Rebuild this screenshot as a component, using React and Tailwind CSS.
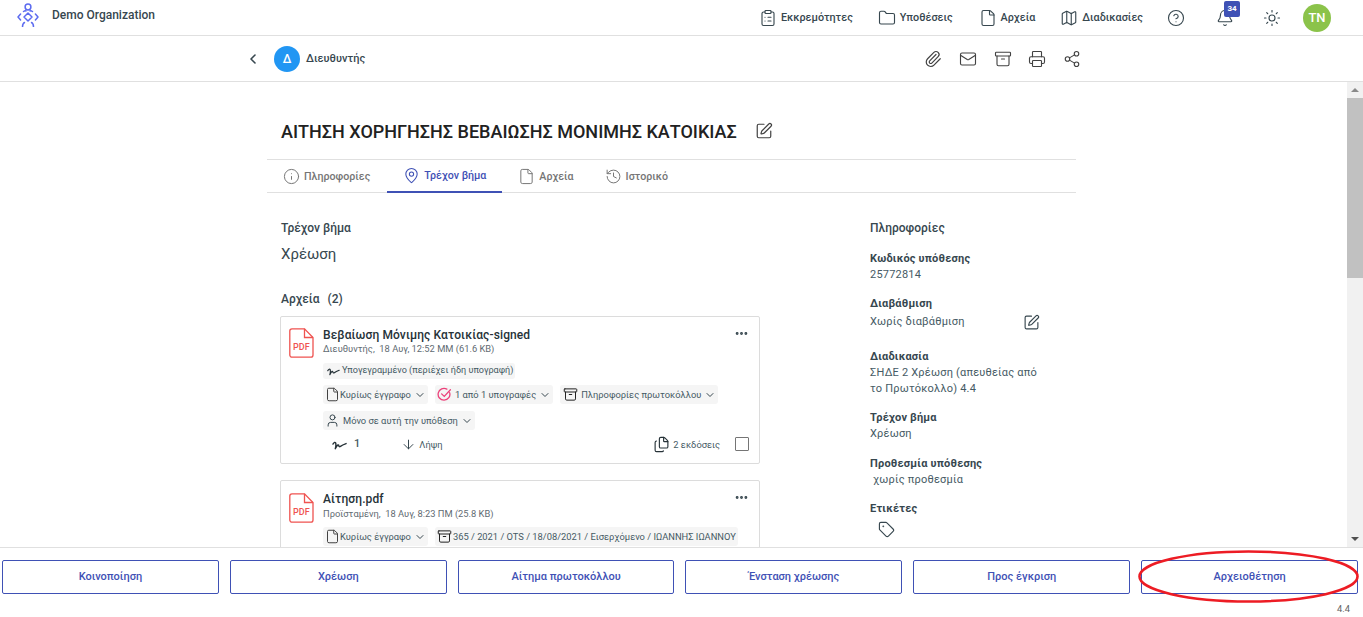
import React from 'react';
import {
  Archive, ArrowDown, Bell, ChevronDown, ChevronLeft, CircleHelp, ClipboardList, Files, File, Folder, History,
  Info, Mail, Map, MapPin, MoreHorizontal, Paperclip, Printer, Share2, SquarePen, Sun, Tag, User,
} from 'lucide-react';

function Logo() {
  return (
    <svg width="22" height="24" viewBox="0 0 22 24" fill="none" stroke="#5c6bf0" strokeWidth="1.5" strokeLinecap="round" strokeLinejoin="round">
      <circle cx="11" cy="4" r="2.9" />
      <path d="M11 10 L15 14 L11 18 L7 14 Z" />
      <path d="M3.6 11 L1 14 L3.6 17" />
      <path d="M18.4 11 L21 14 L18.4 17" />
      <path d="M6.5 8.5 Q8 7.5 9 8" />
      <path d="M15.5 8.5 Q14 7.5 13 8" />
      <path d="M5.5 24 Q5.5 20.5 7.5 19.5" />
      <path d="M16.5 24 Q16.5 20.5 14.5 19.5" />
    </svg>
  );
}

function Squiggle({ className }) {
  return (
    <svg className={className} viewBox="0 0 16 10" fill="none" stroke="#263238" strokeWidth="1.5" strokeLinecap="round" strokeLinejoin="round">
      <path d="M1 4 Q3 1 4 3 Q4.5 6 3.5 9 Q6 4 7 5 Q7.5 7.5 9 6.5 Q11 5 15 3.5" />
    </svg>
  );
}

function PdfIcon() {
  return (
    <svg width="25" height="30" viewBox="0 0 25 30" fill="none" className="shrink-0">
      <path d="M3 .8 H15.5 L24 9.5 V27 a2.2 2.2 0 0 1 -2.2 2.2 H3 A2.2 2.2 0 0 1 .8 27 V3 A2.2 2.2 0 0 1 3 .8 Z" stroke="#ef5350" strokeWidth="1.3" />
      <path d="M15.5 .8 V9.5 H24" stroke="#ef5350" strokeWidth="1.3" />
      <text x="12.4" y="22" textAnchor="middle" fontSize="9" fontWeight="500" fill="#ef5350" fontFamily="Roboto, sans-serif">PDF</text>
    </svg>
  );
}

function Chip({ icon, children, arrow, className = '' }) {
  return (
    <div className={`h-[19px] flex items-center rounded-[3px] bg-[#f5f5f5] pl-[2px] pr-[2px] text-[9.33px] text-[#455a64] whitespace-nowrap ${className}`}>
      {icon}
      <span>{children}</span>
      {arrow && <ChevronDown size={12} strokeWidth={2} className="ml-[3px] text-[#37474f]" />}
    </div>
  );
}

const fileChipIcon = <File size={15} strokeWidth={1.6} className="text-[#424242]" />;

function NavItem({ icon, label, className = '' }) {
  return (
    <div className={`flex items-center gap-[4px] text-[10.8px] font-medium text-[#37474f] ${className}`}>
      {icon}
      <span className="mt-[2px]">{label}</span>
    </div>
  );
}

function InfoBlock({ label, className = '', children }) {
  return (
    <div className={className}>
      <div className="text-[11px] leading-[16px] font-bold tracking-[0.2px] text-[#37474f]">{label}</div>
      <div className="text-[11px] leading-[16px] tracking-[0.2px] text-[#455a64]">{children}</div>
    </div>
  );
}

function Tab({ icon, label, active, className = '' }) {
  return (
    <div className={`h-[33px] flex items-center gap-[4px] text-[10.67px] font-medium ${active ? 'text-[#3f51b5] border-b-2 border-[#3f51b5]' : 'text-[#757575]'} ${className}`}>
      {icon}
      <span>{label}</span>
    </div>
  );
}

const footerActions = ['Κοινοποίηση', 'Χρέωση', 'Αίτημα πρωτοκόλλου', 'Ένσταση χρέωσης', 'Προς έγκριση', 'Αρχειοθέτηση'];

export default function App() {
  return (
    <div className="relative h-[617px] w-[1363px] overflow-hidden flex flex-col bg-white font-['Roboto',sans-serif] text-[#212121]">
      <header className="h-[36px] shrink-0 flex items-center border-b border-[#e0e0e0] pl-[17px] pr-[32px]">
        <div className="flex items-center mb-[6px]">
          <Logo />
          <span className="ml-[13px] text-[12px] font-medium text-[#37474f]">Demo Organization</span>
        </div>
        <div className="ml-auto flex items-center">
          <NavItem icon={<ClipboardList size={18} strokeWidth={1.5} />} label="Εκκρεμότητες" />
          <NavItem className="ml-[25px]" icon={<Folder size={18} strokeWidth={1.5} />} label="Υποθέσεις" />
          <NavItem className="ml-[26px]" icon={<File size={18} strokeWidth={1.5} />} label="Αρχεία" />
          <NavItem className="ml-[25px]" icon={<Map size={18} strokeWidth={1.5} />} label="Διαδικασίες" />
          <CircleHelp size={18} strokeWidth={1.5} className="ml-[24px] text-[#37474f]" />
          <div className="relative ml-[31px]">
            <Bell size={18} strokeWidth={1.5} className="text-[#37474f]" />
            <span className="absolute left-[8px] top-[-8px] w-[16px] h-[16px] rounded-[2px] bg-[#3f51b5] text-white text-[8px] font-bold flex items-center justify-center">34</span>
          </div>
          <Sun size={18} strokeWidth={1.5} className="ml-[29px] text-[#37474f]" />
          <div className="ml-[22px] w-[28px] h-[28px] rounded-full bg-[#8bc34a] text-white text-[13px] font-medium flex items-center justify-center">TN</div>
        </div>
      </header>

      <div className="h-[46px] shrink-0 flex items-center border-b border-[#e0e0e0] pl-[245px] pr-[282px]">
        <ChevronLeft size={16} strokeWidth={2.4} className="text-[#37474f]" />
        <div className="ml-[13px] w-[26px] h-[26px] rounded-full bg-[#2196f3] text-white text-[12px] font-medium flex items-center justify-center">Δ</div>
        <span className="ml-[6px] mt-[1px] text-[11px] font-medium text-[#37474f]">Διευθυντής</span>
        <div className="ml-auto flex items-center gap-[16.7px] text-[#424242]">
          <Paperclip size={18} strokeWidth={1.6} />
          <Mail size={18} strokeWidth={1.5} />
          <Archive size={18} strokeWidth={1.5} />
          <Printer size={18} strokeWidth={1.5} />
          <Share2 size={18} strokeWidth={1.5} />
        </div>
      </div>

      <main className="h-[465px] shrink-0 flex overflow-hidden">
        <div className="flex-1 overflow-hidden pl-[267px]">
          <div className="w-[809px]">
            <div className="h-[77px] flex items-center pl-[14px] pt-[21px]">
              <h1 className="text-[18px] font-medium text-[#212121]">ΑΙΤΗΣΗ ΧΟΡΗΓΗΣΗΣ ΒΕΒΑΙΩΣΗΣ ΜΟΝΙΜΗΣ ΚΑΤΟΙΚΙΑΣ</h1>
              <SquarePen size={18} strokeWidth={1.6} className="ml-[18px] text-[#424242]" />
            </div>
            <div className="h-[34px] flex border-y border-[#e0e0e0]">
              <Tab className="ml-[16px]" icon={<Info size={17} strokeWidth={1.4} />} label="Πληροφορίες" />
              <Tab active className="ml-[17px] w-[115px] pl-[16px]" icon={<MapPin size={17} strokeWidth={1.5} />} label="Τρέχον βήμα" />
              <Tab className="ml-[16px]" icon={<File size={17} strokeWidth={1.4} />} label="Αρχεία" />
              <Tab className="ml-[31px]" icon={<History size={17} strokeWidth={1.4} />} label="Ιστορικό" />
            </div>
            <div className="flex pl-[14px]">
              <div className="w-[480px] shrink-0">
                <div className="mt-[27px] text-[12px] leading-[16px] font-medium text-[#37474f]">Τρέχον βήμα</div>
                <div className="mt-[8px] text-[15px] leading-[20px] text-[#37474f]">Χρέωση</div>
                <div className="mt-[27px] text-[12px] leading-[16px] font-medium text-[#37474f]">Αρχεία <span className="ml-[5px]">(2)</span></div>

                <div className="mt-[9px] ml-[-1px] w-[480px] h-[148px] rounded-[2px] border border-[#dcdcdc] pl-[8px] pr-[10px] pt-[11px] flex">
                  <PdfIcon />
                  <div className="ml-[9px] flex-1 min-w-0">
                    <div className="flex items-center justify-between h-[14px]">
                      <span className="text-[12px] font-medium tracking-[0.1px] text-[#263238]">Βεβαίωση Μόνιμης Κατοικίας-signed</span>
                      <MoreHorizontal size={15} strokeWidth={2.6} className="text-[#37474f] mt-[-4px]" />
                    </div>
                    <div className="text-[9.33px] leading-[14px] text-[#5f6b72]">Διευθυντής, &nbsp;18 Αυγ, 12:52 ΜΜ (61.6 KB)</div>
                    <Chip className="mt-[7px] w-fit !h-[16px] !text-[9.1px]" icon={<Squiggle className="w-[13px] h-[9px] mx-[2px]" />}>Υπογεγραμμένο (περιέχει ήδη υπογραφή)</Chip>
                    <div className="mt-[6px] flex gap-[7px]">
                      <Chip icon={fileChipIcon} arrow>Κυρίως έγγραφο</Chip>
                      <Chip arrow icon={
                        <svg width="15" height="15" viewBox="0 0 14 14" fill="none" stroke="#ec407a" strokeWidth="1.2" strokeLinecap="round" className="mr-[3px]">
                          <path d="M11.8 5.2 A5.5 5.5 0 1 1 9.2 2" />
                          <path d="M4.3 6.4 L6.8 8.8 L12.5 2.6" />
                        </svg>
                      }>1 από 1 υπογραφές</Chip>
                      <Chip icon={<Archive size={15} strokeWidth={1.6} className="ml-[1px] mr-[3px] text-[#212121]" />} arrow>Πληροφορίες πρωτοκόλλου</Chip>
                    </div>
                    <Chip className="mt-[7px] w-fit" icon={<User size={15} strokeWidth={1.6} className="mr-[3px] text-[#37474f]" />} arrow>Μόνο σε αυτή την υπόθεση</Chip>
                    <div className="mt-[6px] flex items-center text-[9.33px] text-[#455a64]">
                      <Squiggle className="ml-[9px] w-[15px] h-[10px]" />
                      <span className="ml-[7px] text-[11px] font-medium">1</span>
                      <ArrowDown size={15} strokeWidth={1.6} className="ml-[41px] text-[#37474f]" />
                      <span className="ml-[3px]">Λήψη</span>
                      <Files size={17} strokeWidth={1.6} className="ml-auto text-[#263238]" />
                      <span className="ml-[3px] mr-[15px]">2 εκδόσεις</span>
                      <span className="w-[14px] h-[14px] border border-[#757575] rounded-[1px] mt-[-2px]" />
                    </div>
                  </div>
                </div>

                <div className="mt-[16px] ml-[-1px] w-[480px] h-[148px] rounded-[2px] border border-[#dcdcdc] pl-[8px] pr-[10px] pt-[12px] flex">
                  <PdfIcon />
                  <div className="ml-[9px] flex-1 min-w-0">
                    <div className="flex items-center justify-between h-[12px]">
                      <span className="text-[12px] font-medium tracking-[0.1px] text-[#263238]">Αίτηση.pdf</span>
                      <MoreHorizontal size={15} strokeWidth={2.6} className="text-[#37474f] mt-[-4px]" />
                    </div>
                    <div className="mt-[2px] text-[9.33px] leading-[14px] text-[#5f6b72]">Προϊσταμένη, &nbsp;18 Αυγ, 8:23 ΠΜ (25.8 KB)</div>
                    <div className="mt-[6px] flex gap-[7px]">
                      <Chip icon={fileChipIcon} arrow>Κυρίως έγγραφο</Chip>
                      <Chip icon={<Archive size={15} strokeWidth={1.6} className="mr-[1px] text-[#212121]" />}>365 / 2021 / OTS / 18/08/2021 / Εισερχόμενο / ΙΩΑΝΝΗΣ ΙΩΑΝΝΟΥ</Chip>
                    </div>
                  </div>
                </div>
              </div>

              <aside className="ml-[109px] w-[170px] pt-[27px]">
                <div className="text-[12px] leading-[16px] font-medium text-[#37474f]">Πληροφορίες</div>
                <InfoBlock className="mt-[15px]" label="Κωδικός υπόθεσης">25772814</InfoBlock>
                <InfoBlock className="mt-[13px]" label="Διαβάθμιση">
                  <div className="flex items-center justify-between h-[20px]">
                    <span className="whitespace-nowrap">Χωρίς διαβάθμιση</span>
                    <SquarePen size={17} strokeWidth={1.6} className="shrink-0 text-[#37474f]" />
                  </div>
                </InfoBlock>
                <InfoBlock className="mt-[17px]" label="Διαδικασία">ΣΗΔΕ 2 Χρέωση (απευθείας από το Πρωτόκολλο) 4.4</InfoBlock>
                <InfoBlock className="mt-[13px]" label="Τρέχον βήμα">Χρέωση</InfoBlock>
                <InfoBlock className="mt-[14px]" label="Προθεσμία υπόθεσης"><span className="ml-[3px]">χωρίς προθεσμία</span></InfoBlock>
                <InfoBlock className="mt-[13px]" label="Ετικέτες">
                  <Tag size={17} strokeWidth={1.6} className="ml-[8px] mt-[4px] text-[#37474f]" />
                </InfoBlock>
              </aside>
            </div>
          </div>
        </div>

        <div className="w-[16px] shrink-0 bg-[#f1f1f1] flex flex-col items-center">
          <div className="h-[16px] flex items-center justify-center">
            <span className="w-0 h-0 border-x-[4px] border-x-transparent border-b-[4px] border-b-[#8a8a8a]" />
          </div>
          <div className="w-full h-[180px] bg-[#c1c1c1]" />
          <div className="mt-auto h-[16px] flex items-center justify-center">
            <span className="w-0 h-0 border-x-[4px] border-x-transparent border-t-[4px] border-t-[#505050]" />
          </div>
        </div>
      </main>

      <footer className="flex-1 border-t border-[#e0e0e0]">
        <div className="flex gap-[11px] pl-[2px] pr-[5px] pt-[12px]">
          {footerActions.map((label) => (
            <button key={label} className="flex-1 h-[34px] rounded-[2px] border border-[#3f51b5] text-[11px] font-medium text-[#3f51b5]">
              {label}
            </button>
          ))}
        </div>
        <div className="mt-[9px] pr-[13px] text-right text-[9.33px] leading-[12px] text-[#616161]">4.4</div>
      </footer>

      <svg className="absolute left-[1136px] top-[548px] pointer-events-none" width="225" height="58" viewBox="0 0 225 58" fill="none">
        <ellipse cx="112.5" cy="28.5" rx="109" ry="25" stroke="#ed1c24" strokeWidth="2.6" />
      </svg>
    </div>
  );
}
